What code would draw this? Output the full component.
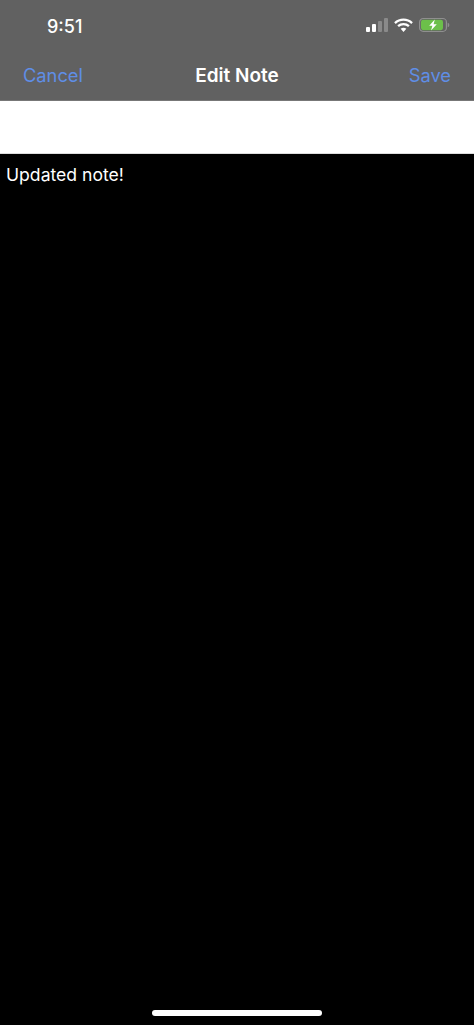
<script>
</script>

<div class="screen">
  <header class="top">
    <div class="status">
      <span class="time">9:51</span>
      <div class="icons">
        <svg class="signal" width="22" height="14" viewBox="0 0 22 14">
          <rect x="0" y="9" width="4" height="5" rx="1" fill="#fff"/>
          <rect x="6" y="6" width="4" height="8" rx="1" fill="#fff"/>
          <rect x="12" y="3" width="4" height="11" rx="1" fill="#8a8a8a"/>
          <rect x="18" y="0" width="4" height="14" rx="1" fill="#8a8a8a"/>
        </svg>
        <svg class="wifi" width="19" height="15" viewBox="0 0 20 15">
          <path d="M1 5 A13 13 0 0 1 19 5" fill="none" stroke="#fff" stroke-width="2.4"/>
          <path d="M4.3 8.2 A8.4 8.4 0 0 1 15.7 8.2" fill="none" stroke="#fff" stroke-width="2.4"/>
          <path d="M7 11 Q10 8.6 13 11 L10 14.4 Z" fill="#fff"/>
        </svg>
        <svg class="battery" width="31" height="14" viewBox="0 0 31 15" preserveAspectRatio="none">
          <rect x="0.6" y="0.6" width="26.8" height="13.8" rx="3.6" fill="none" stroke="#8f8f8f" stroke-width="1.2"/>
          <rect x="2" y="2" width="22" height="11" rx="2.2" fill="#6cc04a"/>
          <path d="M28.7 5 Q30.4 5.6 30.4 7.5 Q30.4 9.4 28.7 10 Z" fill="#8f8f8f"/>
          <path d="M15.8 1.6 L10.2 8.2 H13.4 L12 13.4 L17.8 6.6 H14.6 Z" fill="#fff"/>
        </svg>
      </div>
    </div>
    <nav class="bar">
      <span class="link">Cancel</span>
      <span class="title">Edit Note</span>
      <span class="link end">Save</span>
    </nav>
  </header>
  <div class="field"></div>
  <main class="body">
    <p class="note">Updated note!</p>
    <div class="home"></div>
  </main>
</div>

<style>
  :global(body) {
    margin: 0;
    background: #000;
  }
  .screen {
    width: 474px;
    height: 1025px;
    display: flex;
    flex-direction: column;
    font-family: Inter, "Liberation Sans", sans-serif;
    overflow: hidden;
  }
  .top {
    height: 101px;
    box-sizing: border-box;
    background: #616161;
    border-bottom: 1px solid #777;
    color: #fff;
  }
  .status {
    height: 50px;
    padding: 0 24px 0 47px;
    display: flex;
    align-items: center;
    justify-content: space-between;
  }
  .time {
    font-size: 18px;
    font-weight: 500;
    line-height: 22px;
    margin-top: 3px;
  }
  .icons {
    display: flex;
    align-items: center;
    gap: 6px;
  }
  .bar {
    height: 50px;
    padding: 0 23px;
    display: grid;
    grid-template-columns: 1fr auto 1fr;
    align-items: center;
  }
  .link {
    color: #5f8ee6;
    font-size: 18.3px;
  }
  .end {
    text-align: right;
  }
  .title {
    font-size: 19px;
    font-weight: 600;
  }
  .field {
    height: 52px;
    background: #fff;
  }
  .body {
    flex: 1;
    background: #000;
    color: #fff;
    display: flex;
    flex-direction: column;
    justify-content: space-between;
    border-top: 1px solid #ddd;
  }
  .note {
    margin: 0;
    padding: 10px 6px 0;
    font-size: 17.6px;
    line-height: 22px;
  }
  .home {
    width: 170px;
    height: 6px;
    margin: 0 auto 9px;
    border-radius: 3px;
    background: #fff;
  }
</style>
